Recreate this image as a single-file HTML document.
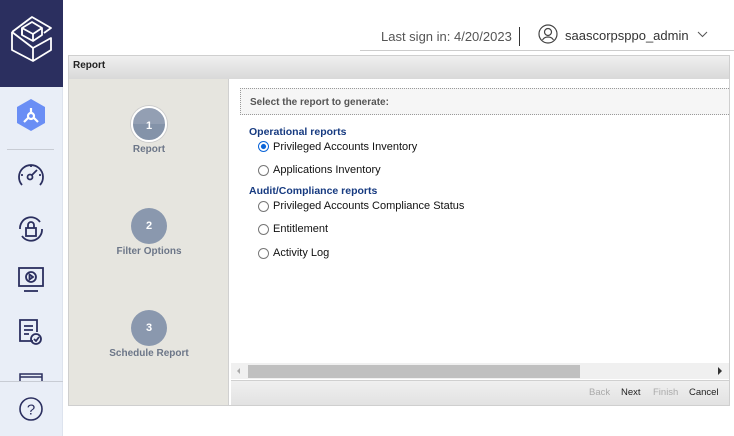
<!DOCTYPE html>
<html><head><style>
*{margin:0;padding:0;box-sizing:border-box}
body{width:734px;height:436px;background:#fff;position:relative;overflow:hidden;font-family:"Liberation Sans",sans-serif}
.abs{position:absolute}
.side{left:0;top:0;width:63px;height:436px;background:#e9eef7;border-right:1px solid #dde3ee}
.logo{left:0;top:0;width:63px;height:87px;background:#2b2f5f}
.step{left:131px;width:36px;height:36px;border-radius:50%;background:#8a98ae;color:#fff;font-weight:bold;font-size:11px;text-align:center;line-height:36px}
.lbl{left:69px;width:160px;text-align:center;font-size:10px;font-weight:bold;color:#6c7688}
.rad{width:11px;height:11px;border-radius:50%;border:1px solid #777;background:#fff}
.opt{font-size:11px;color:#111;left:273px}
.hdr{font-size:10.5px;font-weight:bold;color:#163a80;left:249px}
</style></head><body>
<div class="abs side"></div>
<div class="abs logo">
<svg width="63" height="87" viewBox="0 0 63 87"><g fill="none" stroke="#fff" stroke-width="1.8" stroke-linejoin="round"><path d="M12 32 L32 17 L51 28 L44 33"/><path d="M12 32 L12 50 L33 61 L51 50 L51 38 L33 48 L33 61"/><path d="M12 32 L33 48"/><path d="M22 28 L32 22 L42 28 L42 35 L33 41 L22 35 Z"/><path d="M22 35 L22 28 M33 41 L33 34 L22 28 M33 34 L42 28"/></g></svg>
</div>
<svg class="abs" style="left:15px;top:98px" width="32" height="34" viewBox="0 0 32 34"><path d="M16 1 L30 9 L30 25 L16 33 L2 25 L2 9Z" fill="#6a8ef5"/><g stroke="#fff" stroke-width="2.2" fill="none"><circle cx="16" cy="18" r="3"/><path d="M16 10 V15 M13 20 L9 24 M19 20 L23 24"/></g></svg>
<div class="abs" style="left:7px;top:149px;width:47px;height:1px;background:#c8ccd4"></div>
<svg class="abs" style="left:17px;top:162px" width="28" height="26" viewBox="0 0 28 26"><g fill="none" stroke="#2b2f5f" stroke-width="1.8"><path d="M5 23 A12 12 0 1 1 23 23"/><circle cx="13" cy="15" r="2.5"/><path d="M15 13 L20 8"/><path d="M14 3 V5 M4 13 H6 M22 13 H24"/></g></svg>
<svg class="abs" style="left:16px;top:214px" width="30" height="30" viewBox="0 0 30 30"><g fill="none" stroke="#2b2f5f" stroke-width="1.8"><path d="M4 15 A11 11 0 0 1 24 8 M26 15 A11 11 0 0 1 6 22"/><rect x="10" y="14" width="10" height="8"/><path d="M12 14 V11 A3 3 0 0 1 18 11 V14"/></g></svg>
<svg class="abs" style="left:17px;top:266px" width="28" height="28" viewBox="0 0 28 28"><g fill="none" stroke="#2b2f5f" stroke-width="1.8"><rect x="2" y="2" width="24" height="18"/><circle cx="14" cy="11" r="5"/><path d="M12.5 8.5 L16 11 L12.5 13.5Z"/><path d="M7 25 H21"/></g></svg>
<svg class="abs" style="left:18px;top:318px" width="26" height="28" viewBox="0 0 26 28"><g fill="none" stroke="#2b2f5f" stroke-width="1.8"><path d="M15 23 H2 V2 H19 V14"/><path d="M6 8 H15 M6 12 H15 M6 16 H11"/><circle cx="18" cy="21" r="5"/><path d="M16 21 L18 23 L21 19"/></g></svg>
<svg class="abs" style="left:18px;top:372px" width="26" height="10" viewBox="0 0 26 10"><path d="M2 10 V2 H24 V10 M2 5 H24" fill="none" stroke="#2b2f5f" stroke-width="1.5"/></svg>
<div class="abs" style="left:0;top:381px;width:63px;height:1px;background:#c8ccd4"></div>
<svg class="abs" style="left:18px;top:396px" width="26" height="26" viewBox="0 0 26 26"><circle cx="13" cy="13" r="11" fill="none" stroke="#2b2f5f" stroke-width="1.6"/><text x="13" y="18.5" text-anchor="middle" font-size="15" fill="#2b2f5f" font-family="Liberation Sans">?</text></svg>

<div class="abs" style="left:381px;top:29px;font-size:13px;color:#555">Last sign in: 4/20/2023</div>
<div class="abs" style="left:519px;top:27px;width:1px;height:19px;background:#333"></div>
<svg class="abs" style="left:538px;top:24px" width="20" height="20" viewBox="0 0 20 20"><g fill="none" stroke="#444" stroke-width="1.2"><circle cx="10" cy="10" r="9"/><circle cx="10" cy="8" r="3.5"/><path d="M4.5 16 A6 5 0 0 1 15.5 16"/></g></svg>
<div class="abs" style="left:565px;top:28px;font-size:13px;color:#333">saascorpsppo_admin</div>
<svg class="abs" style="left:697px;top:31px" width="11" height="7" viewBox="0 0 11 7"><path d="M1 1 L5.5 5.5 L10 1" fill="none" stroke="#555" stroke-width="1"/></svg>
<div class="abs" style="left:360px;top:50px;width:374px;height:1px;background:#ccc"></div>

<div class="abs" style="left:68px;top:55px;width:662px;height:351px;border:1px solid #cfcfcf;background:#fff"></div>
<div class="abs" style="left:69px;top:56px;width:660px;height:23px;background:linear-gradient(#f0f0f0,#d9d9d9)"></div>
<div class="abs" style="left:73px;top:60px;font-size:10px;font-weight:bold;color:#222">Report</div>
<div class="abs" style="left:69px;top:79px;width:160px;height:326px;background:#e6e5df;border-right:1px solid #d0d0d0"></div>
<div class="step abs" style="top:106px;border:2px solid #fff;box-shadow:0 0 0 1px #ccc;background:linear-gradient(#939fb3 50%,#8493a9 50%)">1</div>
<div class="lbl abs" style="top:144px">Report</div>
<div class="step abs" style="top:208px">2</div>
<div class="lbl abs" style="top:246px">Filter Options</div>
<div class="step abs" style="top:310px">3</div>
<div class="lbl abs" style="top:348px">Schedule Report</div>

<div class="abs" style="left:240px;top:88px;width:489px;height:27px;border:1px dotted #999;border-right:none;background:#f6f6f6"></div>
<div class="abs" style="left:250px;top:97px;font-size:10px;font-weight:bold;color:#555">Select the report to generate:</div>
<div class="hdr abs" style="top:126px">Operational reports</div>
<div class="abs rad" style="left:258px;top:141px;border-color:#0a64d8;background:radial-gradient(#0a64d8 35%,#fff 45%)"></div>
<div class="opt abs" style="top:141px">Privileged Accounts Inventory</div>
<div class="abs rad" style="left:258px;top:165px"></div>
<div class="opt abs" style="top:164px">Applications Inventory</div>
<div class="hdr abs" style="top:185px">Audit/Compliance reports</div>
<div class="abs rad" style="left:258px;top:201px"></div>
<div class="opt abs" style="top:200px">Privileged Accounts Compliance Status</div>
<div class="abs rad" style="left:258px;top:224px"></div>
<div class="opt abs" style="top:223px">Entitlement</div>
<div class="abs rad" style="left:258px;top:248px"></div>
<div class="opt abs" style="top:247px">Activity Log</div>

<div class="abs" style="left:231px;top:363px;width:498px;height:16px;background:#f0f0f0"></div>
<div class="abs" style="left:248px;top:365px;width:332px;height:13px;background:#c0c0c0"></div>
<div class="abs" style="left:237px;top:368px;width:0;height:0;border:3px solid transparent;border-right:3px solid #aaa;border-left:none"></div>
<div class="abs" style="left:718px;top:367px;width:0;height:0;border:4px solid transparent;border-left:4px solid #333;border-right:none"></div>
<div class="abs" style="left:231px;top:380px;width:498px;height:25px;background:linear-gradient(#f0f0f0,#e2e2e2);border-top:1px solid #d0d0d0"></div>
<div class="abs" style="left:589px;top:387px;font-size:9.5px;color:#aaa">Back</div>
<div class="abs" style="left:621px;top:387px;font-size:9.5px;color:#222">Next</div>
<div class="abs" style="left:653px;top:387px;font-size:9.5px;color:#aaa">Finish</div>
<div class="abs" style="left:689px;top:387px;font-size:9.5px;color:#222">Cancel</div>
</body></html>
